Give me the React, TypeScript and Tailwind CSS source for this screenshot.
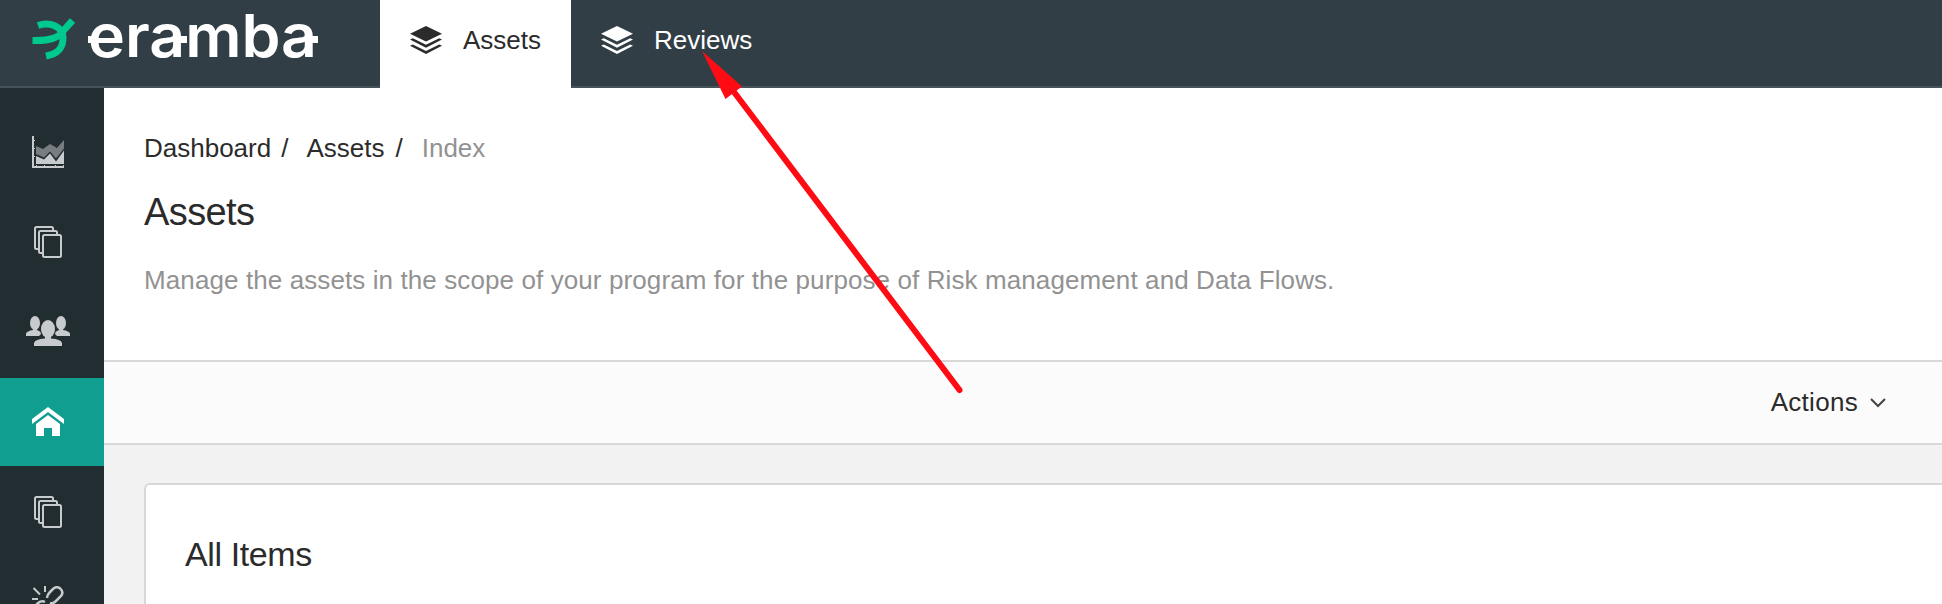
import React from 'react';

const LayersIcon = () => (
  <svg width="32" height="28" viewBox="0 0 32 28" fill="currentColor">
    <path d="M16 0L32 7.8L16 15.6L0 7.8Z" />
    <path d="M0 13.6L2.8 12.2L16 18.8L29.2 12.2L32 13.6L16 21.8Z" />
    <path d="M0 19.8L2.8 18.4L16 25L29.2 18.4L32 19.8L16 28Z" />
  </svg>
);

const ChartIcon = () => (
  <svg width="32" height="32" viewBox="0 0 32 32" fill="currentColor">
    <path d="M0 0H2V4H3V5H2V12H3V13H2V20H3V21H2V30H4V29H5V30H12V29H13V30H23V29H24V30H31V29H32V32H0Z" />
    <path d="M4 10L11 13L18 8L25 12L32 4V12.5L24 22.5L18 15.5L12 21.5L4 18Z" fill="#777d80" />
    <path d="M4 20L12 23.5L18 17.5L24 25.5L32 14.5V28H4Z" />
  </svg>
);

const CopyIcon = () => (
  <svg width="28" height="32" viewBox="0 0 28 32" fill="none" stroke="currentColor" strokeWidth="2">
    <rect x="9" y="9" width="18" height="22" rx="1.5" />
    <path d="M8 27H6.5Q5 27 5 25.5V6.500Q5 5 6.500 5H21.500Q23 5 23 6.500V8" />
    <path d="M4 23H2.500Q1 23 1 21.500V2.500Q1 1 2.500 1H17.500Q19 1 19 2.500V4" />
  </svg>
);

const GroupIcon = () => (
  <svg className="-mt-[2px]" width="44" height="30" viewBox="0 0 44 30" fill="currentColor">
    <ellipse cx="9" cy="7" rx="5" ry="7" />
    <ellipse cx="35" cy="7" rx="5" ry="7" />
    <path d="M0 20V17.500Q1 15 7 14V12H11V14L15 16V18L13 20Z" />
    <path d="M44 20V17.500Q43 15 37 14V12H33V14L29 16V18L31 20Z" />
    <ellipse cx="22" cy="13" rx="8" ry="10" fill="#222d32" />
    <ellipse cx="22" cy="13" rx="7" ry="9" />
    <path d="M8 30V27Q9 23 19 22.500V20H25V22.500Q35 23 36 27V30Z" />
  </svg>
);

const HomeIcon = () => (
  <svg width="32" height="30" viewBox="0 0 32 30" fill="currentColor">
    <path d="M16 0L32 12V17L16 5L0 17V12Z" />
    <path d="M16 8L28 17V29H20V21H12V29H4V17Z" />
  </svg>
);

const UnlinkIcon = () => (
  <svg width="32" height="32" viewBox="0 0 32 32" fill="none" stroke="currentColor" strokeWidth="2">
    <path d="M1.500 2L8 8.500M13 0V6M0 13H6" />
    <path d="M15 12Q15 9 18 6L21.500 2.500Q25 -.2 28.500 2.800Q32 6 29 10L24 15Q21 18 18 17" strokeWidth="2.5" />
    <path d="M13 16Q9 14 5 18L2.500 21Q0 25 3 28.500Q7 32 10.500 29L15 24Q18 21 17 18" strokeWidth="2.5" />
  </svg>
);

const Logo = () => (
  <div className="flex w-[380px] shrink-0 items-start pl-8">
    <svg className="mt-[18px] shrink-0" width="44" height="43" viewBox="0 0 44 43" fill="none" stroke="#00c98d" strokeWidth="7">
      <path d="M6 7.500C17 3.500 31 8 31 20C31 31 25 36 14 38" />
      <path d="M.5 22.500C18 23 27 20 32 12L40.500 2.500" />
    </svg>
    <div className="relative mt-1 ml-[12px]">
      <span className="block origin-left scale-x-[1.06] font-[Inter,sans-serif] text-[59px] leading-[64px] font-semibold text-white">
        eramba
      </span>
      {/* side ticks on the letters */}
      <svg className="absolute top-[32px] left-0" width="230" height="7" viewBox="0 0 230 7" fill="#ffffff">
        <rect x="0" y="0" width="8" height="7" />
        <rect x="92" y="0" width="7" height="7" />
        <rect x="223" y="0" width="7" height="7" />
      </svg>
    </div>
  </div>
);

const tabs = [
  { label: 'Assets', active: true },
  { label: 'Reviews', active: false },
];

const menu = [
  { icon: <ChartIcon /> },
  { icon: <CopyIcon /> },
  { icon: <GroupIcon /> },
  { icon: <HomeIcon />, active: true },
  { icon: <CopyIcon /> },
  { icon: <UnlinkIcon /> },
];

const App = () => {
  return (
    <div className="relative flex h-[604px] w-full flex-col overflow-hidden bg-white font-['Liberation_Sans',Arial,sans-serif] text-[26px] leading-8 text-[#2b2b2b]">
      <header className="flex h-[88px] shrink-0 bg-[#313e45]">
        <div className="flex border-b-2 border-[#46545a]">
          <Logo />
        </div>
        {tabs.map((tab) => (
          <div
            key={tab.label}
            className={
              tab.active
                ? 'flex w-[191px] items-start bg-white pt-6 pl-[30px]'
                : 'flex flex-1 items-start border-b-2 border-[#46545a] pt-6 pl-[30px] text-white'
            }
          >
            <span className="mt-[2px]">
              <LayersIcon />
            </span>
            <span className="ml-[21px]">{tab.label}</span>
          </div>
        ))}
      </header>

      <div className="flex min-h-0 flex-1">
        <nav className="w-[104px] shrink-0 overflow-hidden bg-[#222d32] pt-5 text-[#c7cbcd]">
          {menu.map((item, i) => (
            <div
              key={i}
              className={
                item.active
                  ? 'mb-[2px] flex h-[88px] items-center justify-center bg-[#109e91] pr-2 text-white'
                  : 'mb-[2px] flex h-[88px] items-center justify-center pr-2'
              }
            >
              {item.icon}
            </div>
          ))}
        </nav>

        <main className="flex min-w-0 flex-1 flex-col bg-[#f2f2f2]">
          <div className="h-[272px] shrink-0 bg-white pt-11 pl-10">
            <div className="flex">
              <span>Dashboard</span>
              <span className="ml-[10px]">/</span>
              <span className="ml-[18px]">Assets</span>
              <span className="ml-[11px]">/</span>
              <span className="ml-[19px] text-[#929292]">Index</span>
            </div>
            <h1 className="mt-[26px] text-[38px] leading-[44px] tracking-[-0.6px]">Assets</h1>
            <p className="mt-[30px] whitespace-nowrap tracking-[0.1px] text-[#929292]">
              Manage the assets in the scope of your program for the purpose of Risk management and Data Flows.
            </p>
          </div>

          <div className="flex h-[85px] shrink-0 items-center justify-end border-y-2 border-[#d8d8d8] bg-[#fbfbfb] pr-14">
            <span className="-mt-[2px] tracking-[0.3px]">Actions</span>
            <svg className="ml-[12px]" width="16" height="10" viewBox="0 0 16 10" fill="none" stroke="#444444" strokeWidth="2">
              <path d="M1 1L8 8L15 1" />
            </svg>
          </div>

          <section className="mt-[38px] ml-10 flex-1 rounded-tl-md border-t-2 border-l-2 border-[#d8d8d8] bg-white pt-[49px] pl-[39px]">
            <h2 className="text-[34px] leading-10 tracking-[-0.4px]">All Items</h2>
          </section>
        </main>
      </div>

      {/* pointer to the Reviews tab */}
      <svg className="pointer-events-none absolute top-0 left-0" width="1942" height="604" viewBox="0 0 1942 604">
        <path d="M734 92L959.500 390" stroke="#ff0b14" strokeWidth="6" strokeLinecap="round" />
        <path d="M702 51L742 86.500L725.500 99Z" fill="#ff0b14" />
      </svg>
    </div>
  );
};

export default App;
